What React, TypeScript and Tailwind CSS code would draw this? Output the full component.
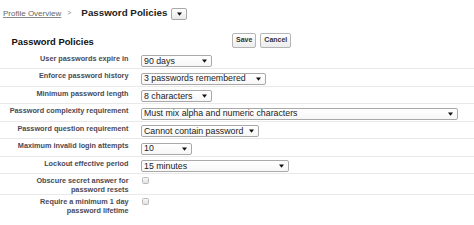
import React from "react";

const rows = [
  { label: "User passwords expire in", value: "90 days", w: "w-[71px]" },
  { label: "Enforce password history", value: "3 passwords remembered", w: "w-[125px]" },
  { label: "Minimum password length", value: "8 characters", w: "w-[71px]" },
  { label: "Password complexity requirement", value: "Must mix alpha and numeric characters", w: "w-[317px]" },
  { label: "Password question requirement", value: "Cannot contain password", w: "w-[118px]" },
  { label: "Maximum invalid login attempts", value: "10", w: "w-[51px]" },
  { label: "Lockout effective period", value: "15 minutes", w: "w-[148px]" },
];

const checks = [
  ["Obscure secret answer for", "password resets"],
  ["Require a minimum 1 day", "password lifetime"],
];

function Arrow() {
  return (
    <svg width="5" height="4" viewBox="0 0 5 4" className="shrink-0">
      <path d="M0 0.5 L5 0.5 L2.5 3.8 Z" fill="#111" />
    </svg>
  );
}

function Select({ value, w }: { value: string; w: string }) {
  return (
    <div
      className={`${w} h-[12px] flex items-center justify-between border border-[#a9a9a9] rounded-[2px] bg-gradient-to-b from-white to-[#f7f7f7] pl-[2px] pr-[4px] text-[8.8px] leading-none text-[#222] whitespace-nowrap`}
    >
      <span>{value}</span>
      <Arrow />
    </div>
  );
}

export default function App() {
  return (
    <div className="w-[474px] h-[225px] bg-white overflow-hidden font-['Liberation_Sans',Arial,sans-serif]">
      {/* breadcrumb */}
      <div className="h-[26px] flex items-center pl-[3px] pt-[1px]">
        <span className="text-[8px] text-[#666] underline decoration-[#888]">Profile Overview</span>
        <span className="ml-[6px] text-[7px] text-[#888]">&gt;</span>
        <span className="ml-[10px] text-[9.8px] font-bold text-[#222]">Password Policies</span>
        <div className="ml-[4px] w-[16px] h-[12px] flex items-center justify-center border border-[#a8a8a8] rounded-[2px] bg-gradient-to-b from-white to-[#e9e9e9]">
          <Arrow />
        </div>
      </div>
      {/* section header */}
      <div className="h-[25.5px] flex items-start">
        <div className="w-[232px] pl-[11.5px] pt-[10.5px] text-[9.4px] leading-[10px] font-bold text-[#111]">
          Password Policies
        </div>
        <div className="flex gap-[4px] pt-[7px]">
          <div className="h-[15px] px-[3px] flex items-center border border-[#b5b5b5] rounded-[2px] bg-gradient-to-b from-white to-[#ececec] text-[7px] font-bold text-[#333]">
            Save
          </div>
          <div className="h-[15px] px-[3px] flex items-center border border-[#b5b5b5] rounded-[2px] bg-gradient-to-b from-white to-[#ececec] text-[7px] font-bold text-[#333]">
            Cancel
          </div>
        </div>
      </div>
      {/* rows */}
      {rows.map((r) => (
        <div key={r.label} className="h-[17.5px] flex items-start border-b border-[#e9e9e9]">
          <div className="w-[128.5px] shrink-0 text-right pt-[2px] text-[7.3px] leading-[9px] font-bold text-[#4a4a56] whitespace-nowrap">
            {r.label}
          </div>
          <div className="ml-[12.5px] pt-[3.5px]">
            <Select value={r.value} w={r.w} />
          </div>
        </div>
      ))}
      {checks.map((c, i) => (
        <div
          key={c[0]}
          className={`h-[21px] flex items-start ${i === 0 ? "border-b border-[#e9e9e9]" : ""}`}
        >
          <div className="w-[128.5px] shrink-0 text-right pt-[2px] text-[7.3px] leading-[9px] font-bold text-[#4a4a56] whitespace-nowrap">
            <div>{c[0]}</div>
            <div>{c[1]}</div>
          </div>
          <div className="ml-[13px] pt-[3px]">
            <div className="w-[7px] h-[7px] border border-[#b8b8b8] rounded-[1.5px] bg-gradient-to-b from-[#f7f7f7] to-[#e2e2e2]" />
          </div>
        </div>
      ))}
    </div>
  );
}
